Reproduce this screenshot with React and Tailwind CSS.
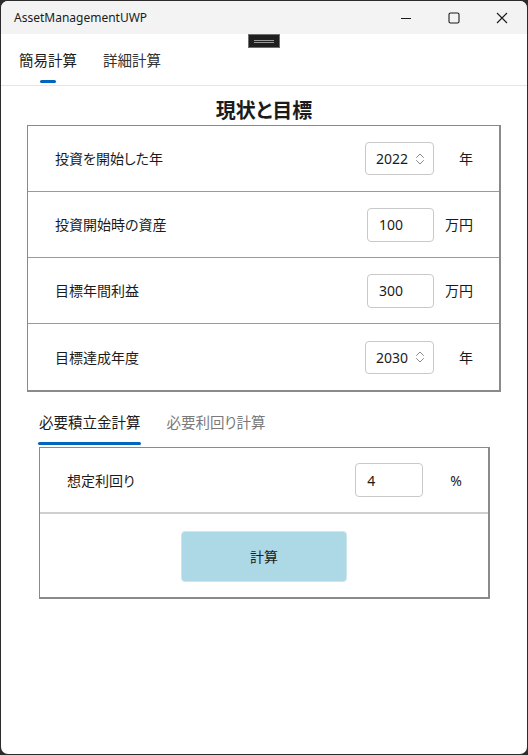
import React from "react";

const font = "[font-family:'Segoe_UI','Noto_Sans','Noto_Sans_CJK_JP',sans-serif]";

function Spinner({ value }) {
  return (
    <div className="w-[69px] h-[33px] flex items-center justify-between pl-[10px] pr-[8px] border border-[#c9c9c9] rounded-[4px] bg-white">
      <span className="text-[14px] text-[#1b1b1b]">{value}</span>
      <svg width="10" height="14" viewBox="0 0 10 14" fill="none" stroke="#8a8a8a" strokeWidth="1" strokeLinecap="round" strokeLinejoin="round">
        <path d="M1.5 5.5 L5 2 L8.5 5.5" />
        <path d="M1.5 8.5 L5 12 L8.5 8.5" />
      </svg>
    </div>
  );
}

function TextBox({ value, width = "w-[67px]" }) {
  return (
    <div className={`${width} h-[34px] flex items-center pl-[11px] border border-[#c9c9c9] rounded-[4px] bg-white`}>
      <span className="text-[14px] text-[#1b1b1b]">{value}</span>
    </div>
  );
}

function Row({ label, children, last }) {
  return (
    <div className={`h-[66px] flex items-center pl-[27px] pr-[26px] ${last ? "" : "border-b border-[#9a9a9a]"}`}>
      <span className="text-[14px] text-[#1b1b1b]">{label}</span>
      <div className="ml-auto flex items-center">{children}</div>
    </div>
  );
}

export default function App() {
  return (
    <div className={`w-[528px] h-[755px] bg-[#2b2b2b] p-[1px] ${font} [font-feature-settings:'palt']`}>
      <div className="w-full h-full bg-white rounded-[7px] overflow-hidden flex flex-col">
        {/* title bar */}
        <div className="h-[33px] shrink-0 bg-[#f3f3f3] flex items-center pl-[13px]">
          <span className="text-[12px] text-[#1b1b1b]">AssetManagementUWP</span>
          <div className="ml-auto flex items-center h-full pr-[1px]">
            <div className="w-[48px] h-full flex items-center justify-center">
              <svg width="12" height="12" viewBox="0 0 12 12"><path d="M1 6.5 H11" stroke="#1b1b1b" strokeWidth="1.2" /></svg>
            </div>
            <div className="w-[48px] h-full flex items-center justify-center">
              <svg width="12" height="12" viewBox="0 0 12 12"><rect x="1" y="1" width="10" height="10" rx="1.5" fill="none" stroke="#1b1b1b" strokeWidth="1.1" /></svg>
            </div>
            <div className="w-[48px] h-full flex items-center justify-center">
              <svg width="12" height="12" viewBox="0 0 12 12"><path d="M1 1 L11 11 M11 1 L1 11" stroke="#1b1b1b" strokeWidth="1.1" /></svg>
            </div>
          </div>
        </div>

        <div className="relative flex-1">
          {/* debug toolbar */}
          <div className="absolute left-[247px] top-0 w-[32px] h-[14px] bg-[#1f1f1f] border border-[#6f6f6f] flex flex-col items-center justify-center gap-[1px]">
            <div className="w-[20px] h-[1px] bg-[#9a9a9a]" />
            <div className="w-[20px] h-[1px] bg-[#9a9a9a]" />
          </div>

          {/* top tabs */}
          <div className="h-[52px] border-b border-[#e5e5e5] flex pl-[18px] gap-[26px]">
            <div className="flex flex-col items-center pt-[16px]">
              <span className="text-[14.5px] leading-[20px] text-[#1b1b1b]">簡易計算</span>
              <div className="mt-[10px] w-[16px] h-[3px] rounded-full bg-[#0067c0]" />
            </div>
            <div className="flex flex-col items-center pt-[16px]">
              <span className="text-[14.5px] leading-[20px] text-[#333]">詳細計算</span>
            </div>
          </div>

          {/* heading */}
          <div className="pt-[13px] h-[39px] flex justify-center">
            <span className="text-[20px] leading-[24px] font-bold text-[#1b1b1b]">現状と目標</span>
          </div>

          {/* current/goal box */}
          <div className="ml-[26px] w-[474px] border border-r-2 border-b-2 border-[#8a8a8a]">
            <Row label="投資を開始した年">
              <Spinner value="2022" />
              <span className="ml-[25px] text-[14px] text-[#1b1b1b]">年</span>
            </Row>
            <Row label="投資開始時の資産">
              <TextBox value="100" />
              <span className="ml-[11px] text-[14px] text-[#1b1b1b]">万円</span>
            </Row>
            <Row label="目標年間利益">
              <TextBox value="300" />
              <span className="ml-[11px] text-[14px] text-[#1b1b1b]">万円</span>
            </Row>
            <Row label="目標達成年度" last>
              <Spinner value="2030" />
              <span className="ml-[25px] text-[14px] text-[#1b1b1b]">年</span>
            </Row>
          </div>

          {/* sub tabs */}
          <div className="flex pl-[37px] gap-[26px]">
            <div className="flex flex-col pt-[20px]">
              <span className="text-[14.5px] leading-[20px] text-[#1b1b1b] pl-[1px]">必要積立金計算</span>
              <div className="mt-[10px] h-[3px] rounded-full bg-[#0067c0]" />
            </div>
            <div className="flex flex-col pt-[20px]">
              <span className="text-[14.5px] leading-[20px] text-[#7a7a7a]">必要利回り計算</span>
            </div>
          </div>

          {/* calc box */}
          <div className="mt-[2px] ml-[38px] w-[451px] border border-r-2 border-b-2 border-[#8a8a8a]">
            <div className="h-[66px] flex items-center pl-[27px] pr-[26px] border-b-2 border-[#cfcfcf]">
              <span className="text-[14px] text-[#1b1b1b]">想定利回り</span>
              <div className="ml-auto flex items-center">
                <TextBox value="4" width="w-[68px]" />
                <span className="ml-[27px] text-[14px] text-[#1b1b1b]">%</span>
              </div>
            </div>
            <div className="flex justify-center pt-[17px] pb-[15px]">
              <button type="button" className="w-[166px] h-[51px] rounded-[4px] bg-[#add8e6] border border-[#cde6ee] text-[14px] text-[#1b1b1b]">
                計算
              </button>
            </div>
          </div>
        </div>
      </div>
    </div>
  );
}
